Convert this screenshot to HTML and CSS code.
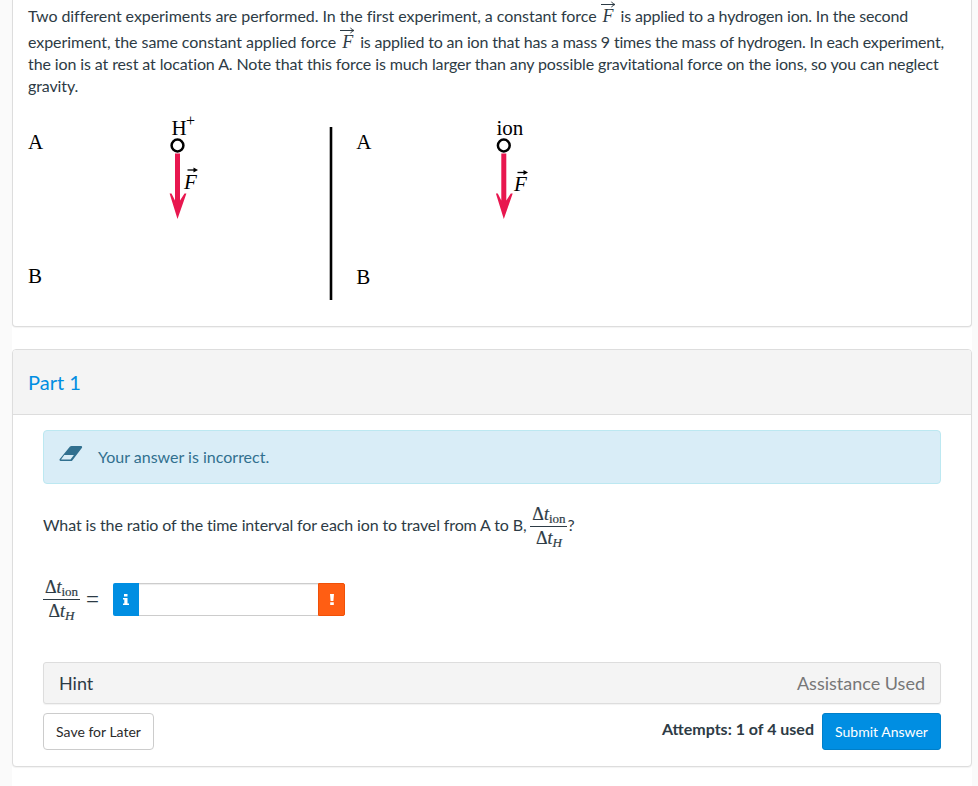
FILE: index.html
```html
<!DOCTYPE html>
<html lang="en">
  <head>
    <meta charset="UTF-8" />
    <title>Part 1</title>
    <link rel="stylesheet" href="styles.css">
  </head>
  <body>
    <main class="page">
      <section class="panel problem">
        <p class="statement">
          <span class="wide">Two different experiments are performed. In the first experiment, a constant force</span>
          <span class="vec"><svg width="15" height="7" viewBox="0 0 15 7"><path d="M0 3.5H13.5M10.5 .7Q11.5 3 14 3.5Q11.5 4 10.5 6.3" /></svg>F</span>
          <span class="tight">is applied to a hydrogen ion. In the second</span>
          <span class="wide">experiment, the same constant applied force</span>
          <span class="vec"><svg width="15" height="7" viewBox="0 0 15 7"><path d="M0 3.5H13.5M10.5 .7Q11.5 3 14 3.5Q11.5 4 10.5 6.3" /></svg>F</span>
          <span class="tight">is applied to an ion that has a mass 9 times the mass of hydrogen. In each experiment,</span>
          the ion is at rest at location A. Note that this force is much larger than any possible gravitational force on the ions, so you can neglect gravity.
        </p>

        <svg class="diagram" width="600" height="190" viewBox="0 0 600 190">
          <text x="0" y="37">A</text>
          <text x="0" y="171">B</text>
          <text x="143.5" y="22.5">H</text>
          <text class="sup" x="158" y="14">+</text>
          <circle cx="149.5" cy="33.5" r="5.9" />
          <path class="force" d="M147 41.5h5v47l4.5-7h1.9l-8.9 25.5l-7.9-25.5h1.9l3.5 7z" />
          <text class="italic" x="156" y="76.5">F</text>
          <path class="arrow" d="M159.5 58h7" /><path d="M165.5 55.5l4.5 2.5l-4.5 2.5z" />

          <path class="divider" d="M303 15v173" />

          <text x="328.3" y="37.4">A</text>
          <text x="328.3" y="171.5">B</text>
          <text x="468.5" y="23">ion</text>
          <circle cx="475.8" cy="33.5" r="5.9" />
          <path class="force" d="M473.3 41.5h5v47l4.5-7h1.9l-8.9 25.5l-7.9-25.5h1.9l3.5 7z" />
          <text class="italic" x="486" y="78.5">F</text>
          <path class="arrow" d="M489.5 60.5h7" /><path d="M495.5 58l4.5 2.5l-4.5 2.5z" />
        </svg>
      </section>

      <section class="panel part">
        <header class="part-header">
          <h2>Part 1</h2>
        </header>
        <div class="part-body">
          <div class="alert">
            <svg width="24" height="16" viewBox="0 0 24 16">
              <path fill-rule="evenodd" d="M11 .5Q11.6 0 12.5 0H22Q23.8 .3 22.8 2L13.3 14.5Q12.7 15 12 15H1.5Q-.2 14.7 .8 13ZM5.3 9L2 13.5H11.5L14.9 9Z" />
            </svg>
            <span>Your answer is incorrect.</span>
          </div>

          <div class="question">
            <span class="text">What is the ratio of the time interval for each ion to travel from A to B,</span>
            <span class="fraction">
              <span class="numerator">Δ<i>t</i><sub>ion</sub></span>
              <span class="denominator">Δ<i>t</i><sub><i>H</i></sub></span>
            </span>
            <span class="text">?</span>
          </div>

          <div class="answer">
            <span class="fraction">
              <span class="numerator">Δ<i>t</i><sub>ion</sub></span>
              <span class="denominator">Δ<i>t</i><sub><i>H</i></sub></span>
            </span>
            <span class="equals">=</span>
            <div class="input-group">
              <span class="addon info">
                <svg width="8" height="12" viewBox="0 0 8 12"><path d="M2 0h3.5v2.5H2zM1 4h4.500v5.500H7V11H1V9.500h1.300v-4H1z" /></svg>
              </span>
              <input type="text" aria-label="Ratio">
              <span class="addon error">
                <svg width="6" height="12" viewBox="0 0 6 12"><path d="M1 0h4l-.6 7H1.6zM1.2 8.2h3.6v2.8H1.2z" /></svg>
              </span>
            </div>
          </div>

          <div class="hint">
            <span>Hint</span>
            <span class="muted">Assistance Used</span>
          </div>

          <div class="actions">
            <button class="btn">Save for Later</button>
            <span class="attempts">Attempts: 1 of 4 used</span>
            <button class="btn btn-primary">Submit Answer</button>
          </div>
        </div>
      </section>
    </main>
  </body>
</html>
```

FILE: styles.css
```css
* {
  box-sizing: border-box;
}

body {
  margin: 0;
  background: #fafafa;
  color: #2d3b45;
  font: 16px/22px Lato, sans-serif;
}

.page {
  width: 960px;
  height: 786px;
  margin-left: 12px;
  background: #fff;
}

.panel {
  border: 1px solid #ddd;
  border-radius: 4px;
  background: #fff;
  box-shadow: 0 1px 1px rgba(0, 0, 0, 0.05);
}

.problem {
  height: 327px;
  padding: 1px 15px 0;
  border-top: 0;
  border-radius: 0 0 4px 4px;
}

.statement {
  margin: 0;
  letter-spacing: -0.11px;
}

.wide {
  letter-spacing: -0.06px;
}

.tight {
  letter-spacing: -0.17px;
}

.vec {
  display: inline-block;
  width: 16px;
  padding-left: 2px;
  font: italic 18px/14px "Liberation Serif", serif;
  letter-spacing: 0;
}

.vec svg {
  display: block;
  margin-left: -2px;
  margin-bottom: 1px;
  fill: none;
  stroke: #2d3b45;
}

.diagram {
  display: block;
  margin-top: 15px;
  overflow: visible;
  fill: #000;
  font: 21px "Liberation Serif", serif;
}

.diagram .sup {
  font-size: 16px;
}

.diagram .italic {
  font-style: italic;
}

.diagram circle {
  fill: none;
  stroke: #000;
  stroke-width: 2.5;
}

.diagram .force {
  fill: #e8174f;
}

.diagram .arrow {
  stroke: #000;
  stroke-width: 1.3;
}

.diagram .divider {
  stroke: #000;
  stroke-width: 2.6;
}

.part {
  height: 418px;
  margin-top: 22px;
}

.part-header {
  height: 65px;
  padding: 21px 15px;
  border-bottom: 1px solid #ddd;
  border-radius: 3px 3px 0 0;
  background: #f4f4f4;
}

.part-header h2 {
  margin: 0;
  color: #008ee2;
  font-size: 20px;
  font-weight: 400;
}

.part-body {
  padding: 15px 30px;
}

.alert {
  display: flex;
  height: 54px;
  padding: 15px;
  gap: 15px;
  border: 1px solid #bce8f1;
  border-radius: 4px;
  background: #d9edf7;
  color: #31708f;
}

.alert svg {
  fill: #31708f;
}

.question {
  display: flex;
  align-items: center;
  height: 46px;
  margin-top: 20px;
}

.question .text {
  margin-bottom: 4px;
  letter-spacing: -0.12px;
}

.fraction {
  display: flex;
  flex-direction: column;
  align-items: center;
  width: 37px;
  font: 18px/23px "Liberation Serif", serif;
  -webkit-text-stroke: 0.2px #2d3b45;
}

.question .fraction {
  margin-left: 4px;
}

.fraction span {
  width: 100%;
  height: 23px;
  text-align: center;
}

.fraction .numerator {
  border-bottom: 1px solid #2d3b45;
  line-height: 20px;
}

.fraction .denominator {
  line-height: 22px;
}

.fraction sub {
  font-size: 13px;
  line-height: 0;
  vertical-align: -3px;
}

.answer {
  display: flex;
  align-items: center;
  height: 46px;
  margin-top: 27px;
}

.equals {
  width: 33px;
  padding-left: 6px;
  font: 23px "Liberation Serif", serif;
}

.input-group {
  display: flex;
  align-self: flex-start;
  width: 232px;
  height: 33px;
  margin-top: 6px;
}

.input-group input {
  width: 179px;
  border: 1px solid #ccc;
  border-width: 1px 0;
  box-shadow: inset 0 1px 1px rgba(0, 0, 0, 0.075);
}

.addon {
  display: flex;
  align-items: center;
  justify-content: center;
  width: 27px;
  border-radius: 0 2px 2px 0;
  background: #ff5e13;
}

.addon svg {
  fill: #fff;
}

.addon.info {
  width: 26px;
  border-radius: 2px 0 0 2px;
  background: #008ee2;
}

.addon.error {
  border: 1px solid #f05007;
}

.hint {
  display: flex;
  align-items: center;
  justify-content: space-between;
  height: 42px;
  margin-top: 39px;
  padding: 0 15px;
  border: 1px solid #ddd;
  border-radius: 3px;
  background: #f4f4f4;
  font-size: 18px;
  box-shadow: 0 1px 1px rgba(0, 0, 0, 0.05);
}

.muted {
  color: #777;
}

.actions {
  display: flex;
  margin-top: 9px;
}

.btn {
  width: 111px;
  height: 37px;
  padding: 0;
  border: 1px solid #ccc;
  border-radius: 4px;
  background: #fff;
  color: #2b2b2b;
  font: 14px Lato, sans-serif;
}

.btn-primary {
  width: 119px;
  border-color: #007fc9;
  border-radius: 3px;
  background: #008ee2;
  color: #fff;
}

.attempts {
  margin-left: auto;
  margin-right: 8px;
  padding-top: 5px;
  font-weight: 700;
}
```
